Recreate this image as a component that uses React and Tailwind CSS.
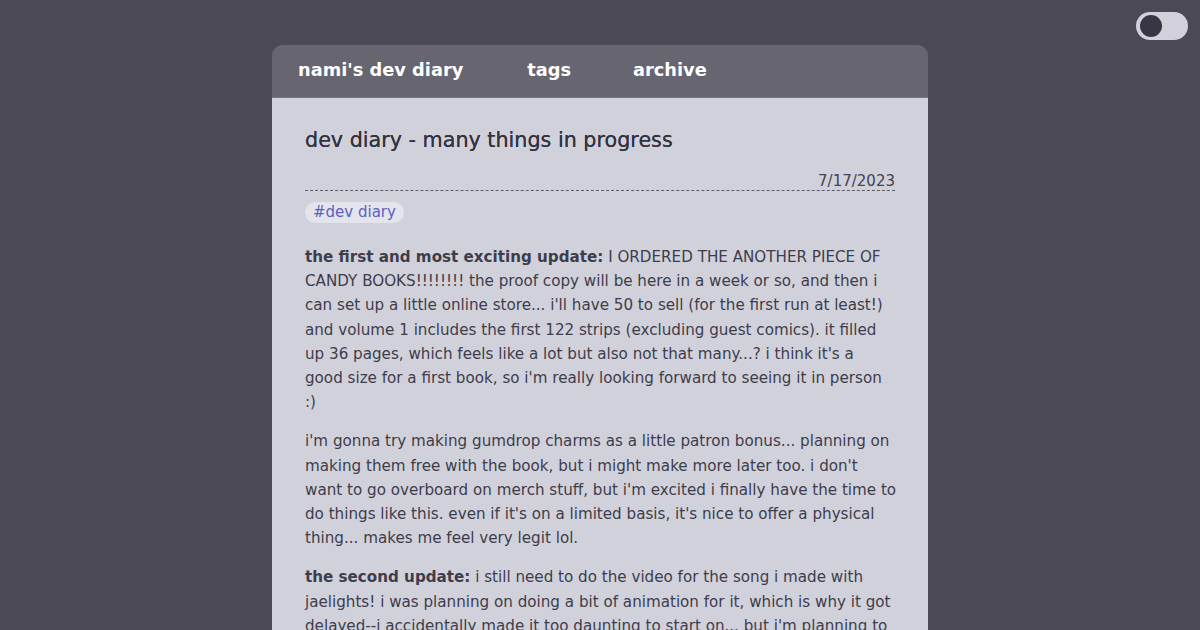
export default function App() {
  return (
    <div className="min-h-screen bg-[#4b4955] relative overflow-hidden" style={{ fontFamily: '"DejaVu Sans", Verdana, sans-serif' }}>
      <div className="absolute right-[12px] top-[12px] w-[52px] h-[28px] rounded-full bg-[#d2d1db] flex items-center pl-[4px]">
        <div className="w-[22px] h-[22px] rounded-full bg-[#383644]" />
      </div>
      <div className="pt-[45px] flex justify-center">
        <div className="w-[656px] rounded-[10px] overflow-hidden">
          <nav className="h-[53px] bg-[#67656f] border-b border-[#75737d] flex items-center pl-[26px] pb-[1px] text-[17.8px] font-bold text-white">
            <span>nami's dev diary</span>
            <span className="ml-[64px]">tags</span>
            <span className="ml-[62px]">archive</span>
          </nav>
          <div className="bg-[#d1d1db] pl-[33px] pr-[30px] pt-[28px] pb-[40px] text-[#3e3d4a]">
            <h1 className="text-[20.7px] leading-[28px] text-[#34333f] [text-shadow:0_0_0.5px_#34333f] mr-[3px]">dev diary - many things in progress</h1>
            <div className="mt-[18px] mr-[3px] border-b-[1.5px] border-dashed border-[#5f5e6b] flex justify-end">
              <span className="text-[15px] leading-[18px] text-[#44434f]">7/17/2023</span>
            </div>
            <div className="mt-[11px] flex">
              <span className="bg-[#e4e4ec] rounded-full px-[8px] text-[15px] leading-[21px] text-[#5b5fc4]">#dev diary</span>
            </div>
            <div className="mt-[22px] text-[15.15px] leading-[24.2px] flex flex-col gap-[15px]">
              <p>
                <b>the first and most exciting update:</b> I ORDERED THE ANOTHER PIECE OF CANDY BOOKS!!!!!!!! the proof copy will be here in a week or so, and then i can set up a little online store... i'll have 50 to sell (for the first run at least!) and volume 1 includes the first 122 strips (excluding guest comics). it filled up 36 pages, which feels like a lot but also not that many...? i think it's a<br />good size for a first book, so i'm really looking forward to seeing it in person<br />:)
              </p>
              <p>
                i'm gonna try making gumdrop charms as a little patron bonus... planning on making them free with the book, but i might make more later too. i don't want to go overboard on merch stuff, but i'm excited i finally have the time to do things like this. even if it's on a limited basis, it's nice to offer a physical thing... makes me feel very legit lol.
              </p>
              <p>
                <b>the second update:</b> i still need to do the video for the song i made with jaelights! i was planning on doing a bit of animation for it, which is why it got delayed--i accidentally made it too daunting to start on... but i'm planning to get it done soon, hopefully in the next week or two.
              </p>
            </div>
          </div>
        </div>
      </div>
    </div>
  );
}
